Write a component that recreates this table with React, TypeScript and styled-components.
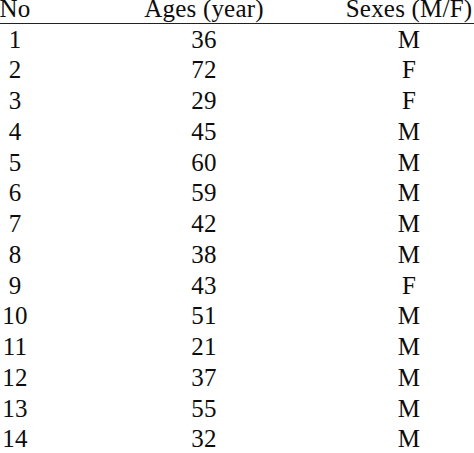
import React from "react";
import styled, { createGlobalStyle } from "styled-components";

const rows: Array<[number, number, string]> = [
   [1, 36, "M"],
   [2, 72, "F"],
   [3, 29, "F"],
   [4, 45, "M"],
   [5, 60, "M"],
   [6, 59, "M"],
   [7, 42, "M"],
   [8, 38, "M"],
   [9, 43, "F"],
   [10, 51, "M"],
   [11, 21, "M"],
   [12, 37, "M"],
   [13, 55, "M"],
   [14, 32, "M"],
];

const GlobalStyle = createGlobalStyle`
   html, body {
      margin: 0;
      padding: 0;
      background: #fff;
      overflow: hidden;
   }
`;

const App = () => {
   return (
      <>
         <GlobalStyle />
         <Table>
            <HeadRow>
               <Cell>No</Cell>
               <Cell>Ages (year)</Cell>
               <Cell>Sexes (M/F)</Cell>
            </HeadRow>
            {rows.map(([no, age, sex]) => (
               <Row key={no}>
                  <Cell>{no}</Cell>
                  <Cell>{age}</Cell>
                  <Cell>{sex}</Cell>
               </Row>
            ))}
         </Table>
      </>
   );
};

const Table = styled.div`
   width: 474px;
   font-family: "Liberation Serif", "Times New Roman", serif;
   font-size: 25px;
   letter-spacing: 0.2px;
   color: #0d0d0d;
`;

const Row = styled.div`
   display: grid;
   grid-template-columns: 30px 348px 62px;
   height: 30.75px;
   line-height: 30.75px;
`;

const HeadRow = styled(Row)`
   height: 17px;
   line-height: 17px;
   padding-bottom: 6px;
   margin-bottom: 0.6px;
   border-bottom: 1.5px solid #222;
`;

const Cell = styled.div`
   display: flex;
   justify-content: center;
   white-space: nowrap;
`;

export default App;
